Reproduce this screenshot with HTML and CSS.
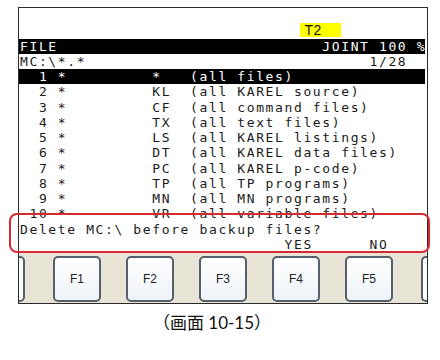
FILE: index.html
```html
<!DOCTYPE html>
<html lang="zh">
<head>
  <meta charset="UTF-8">
  <title>FILE - Delete MC:\ before backup</title>
  <link rel="stylesheet" href="styles.css">
</head>
<body>
  <div class="page">
    <div class="pendant">
      <div class="screen">
        <div class="line"> </div>
        <div class="line">                              <span class="mode">T2</span></div>
        <div class="line inv">FILE                            JOINT 100 %</div>
        <div class="line">MC:\*.*                              1/28</div>
        <div class="line inv">  1 *         *   (all files)</div>
        <div class="line">  2 *         KL  (all KAREL source)</div>
        <div class="line">  3 *         CF  (all command files)</div>
        <div class="line">  4 *         TX  (all text files)</div>
        <div class="line">  5 *         LS  (all KAREL listings)</div>
        <div class="line">  6 *         DT  (all KAREL data files)</div>
        <div class="line">  7 *         PC  (all KAREL p-code)</div>
        <div class="line">  8 *         TP  (all TP programs)</div>
        <div class="line">  9 *         MN  (all MN programs)</div>
        <div class="line"> 10 *         VR  (all variable files)</div>
        <div class="line">Delete MC:\ before backup files?</div>
        <div class="line">                            YES      NO</div>
      </div>

      <div class="fkeys">
        <div class="edge edge-left"></div>
        <div class="key">F1</div>
        <div class="key">F2</div>
        <div class="key">F3</div>
        <div class="key">F4</div>
        <div class="key">F5</div>
        <div class="edge edge-right"></div>
      </div>
    </div>

    <!-- red callout round the prompt -->
    <div class="callout"></div>

    <p class="caption">（画面 10-15）</p>
  </div>
</body>
</html>
```

FILE: styles.css
```css
body {
  margin: 0;
  background: #fff;
}

.page {
  position: relative;
  width: 440px;
  height: 360px;
  padding-top: 7px;
  box-sizing: border-box;
}

.pendant {
  margin-left: 18px;
  width: 410px;
  border: 1px solid #2a2a2a;
  box-sizing: border-box;
  background: #fff;
}

.screen {
  padding: 0 0 0 1px;
  font-family: "DejaVu Sans Mono", monospace;
  font-size: 13px;
  line-height: 15.25px;
  letter-spacing: 1.62px;
  color: #1a1a1a;
}

.line {
  height: 15.25px;
  white-space: pre;
}

.line.inv {
  background: #000;
  color: #fff;
  margin: 0 2px 0 -1px;
  padding-left: 1px;
}

.mode {
  display: inline-block;
  vertical-align: top;
  margin-left: -3px;
  width: 41px;
  height: 14px;
  padding-left: 4px;
  box-sizing: border-box;
  background: #ffff00;
  color: #111;
  font-family: "Liberation Sans", Arial, sans-serif;
  font-size: 14px;
  line-height: 14px;
  letter-spacing: 0.5px;
}

.fkeys {
  display: flex;
  align-items: flex-end;
  height: 51px;
  padding-bottom: 1px;
  box-sizing: border-box;
  background: #e8e4d6;
}

.key {
  width: 48px;
  height: 46px;
  margin-right: 25px;
  box-sizing: border-box;
  border: 2px solid #55606b;
  border-radius: 5px;
  background: linear-gradient(#ffffff, #eef3f8);
  display: flex;
  align-items: center;
  justify-content: center;
  font-family: "Liberation Sans", Arial, sans-serif;
  font-size: 12px;
  color: #222;
}

.edge {
  width: 6px;
  height: 46px;
  box-sizing: border-box;
  border: 2px solid #55606b;
  background: #fff;
}

.edge-left {
  border-left: none;
  border-radius: 0 5px 5px 0;
  margin-right: 28px;
}

.edge-right {
  margin-left: auto;
  border-right: none;
  border-radius: 5px 0 0 5px;
}

.callout {
  position: absolute;
  left: 9px;
  top: 213px;
  width: 421px;
  height: 40px;
  box-sizing: border-box;
  border: 2px solid #d42a32;
  border-radius: 8px;
}

.caption {
  margin: 9px 0 0;
  padding-right: 16px;
  text-align: center;
  font-family: Lato, "Noto Sans CJK SC", sans-serif;
  font-size: 17px;
  line-height: 20px;
  color: #111;
}
```
